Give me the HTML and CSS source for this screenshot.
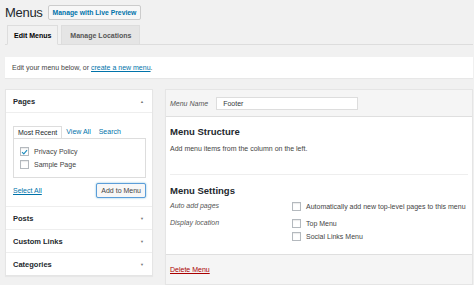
FILE: index.html
```html
<!DOCTYPE html>
<html lang="en">
<head>
  <meta charset="UTF-8">
  <title>Menus</title>
  <link rel="stylesheet" href="styles.css">
</head>
<body>
  <div class="wrap">
    <div class="page-head">
      <h1>Menus</h1>
      <a class="head-button" href="#">Manage with Live Preview</a>
    </div>

    <div class="nav-tabs">
      <a class="nav-tab active" href="#">Edit Menus</a>
      <a class="nav-tab" href="#">Manage Locations</a>
    </div>

    <div class="notice">
      Edit your menu below, or <a href="#">create a new menu</a>.
    </div>

    <div class="columns">
      <div class="sidebar">
        <div class="acc-section open">
          <div class="acc-title">Pages <span class="arrow">&#9650;</span></div>
          <div class="acc-body">
            <div class="inner-tabs">
              <span class="inner-tab active">Most Recent</span>
              <a class="inner-tab" href="#">View All</a>
              <a class="inner-tab" href="#">Search</a>
            </div>
            <div class="checklist">
              <label class="check-row"><span class="box checked"><svg viewBox="0 0 10 10" width="8" height="8"><path d="M1.5 5.2 L4 7.6 L8.6 2.2" fill="none" stroke="#1e8cbe" stroke-width="1.6"/></svg></span>Privacy Policy</label>
              <label class="check-row"><span class="box"></span>Sample Page</label>
            </div>
            <div class="acc-actions">
              <a href="#">Select All</a>
              <button class="btn">Add to Menu</button>
            </div>
          </div>
        </div>
        <div class="acc-section">
          <div class="acc-title">Posts <span class="arrow">&#9660;</span></div>
        </div>
        <div class="acc-section">
          <div class="acc-title">Custom Links <span class="arrow">&#9660;</span></div>
        </div>
        <div class="acc-section">
          <div class="acc-title">Categories <span class="arrow">&#9660;</span></div>
        </div>
      </div>

      <div class="menu-edit">
        <div class="menu-header">
          <label class="field-label">Menu Name</label>
          <input class="menu-name" type="text" value="Footer">
        </div>
        <div class="menu-body">
          <h3>Menu Structure</h3>
          <p class="hint">Add menu items from the column on the left.</p>
          <div class="settings">
            <h3>Menu Settings</h3>
            <div class="setting-row">
              <span class="field-label">Auto add pages</span>
              <div class="options">
                <label class="check-row"><span class="box"></span>Automatically add new top-level pages to this menu</label>
              </div>
            </div>
            <div class="setting-row">
              <span class="field-label">Display location</span>
              <div class="options">
                <label class="check-row"><span class="box"></span>Top Menu</label>
                <label class="check-row"><span class="box"></span>Social Links Menu</label>
              </div>
            </div>
          </div>
        </div>
        <div class="menu-footer">
          <a class="delete" href="#">Delete Menu</a>
        </div>
      </div>
    </div>
  </div>
</body>
</html>
```

FILE: styles.css
```css
body {
  margin: 0;
  background-color: #f1f1f1;
  font-family: "Liberation Sans", Arial, sans-serif;
  font-size: 7px;
  color: #444;
}

a {
  color: #0073aa;
}

.wrap {
  padding: 3px 1px 0 5px;
}

.page-head {
  display: flex;
  align-items: center;
  gap: 5px;
  height: 18px;
}

h1 {
  margin: 0;
  font-size: 13px;
  font-weight: 300;
  letter-spacing: -0.3px;
  color: #23282d;
}

.head-button {
  display: inline-block;
  padding: 3px 4px;
  border: 1px solid #ccc;
  border-radius: 2px;
  background-color: #f7f7f7;
  font-size: 6.8px;
  font-weight: bold;
  text-decoration: none;
}

.nav-tabs {
  display: flex;
  gap: 3px;
  margin-top: 4px;
  padding-left: 2px;
  border-bottom: 1px solid #ddd;
  height: 19px;
}

.nav-tab {
  display: flex;
  align-items: center;
  padding: 0 6px;
  margin-bottom: -1px;
  border: 1px solid #ddd;
  background-color: #e5e5e5;
  color: #555;
  font-size: 7px;
  font-weight: bold;
  text-decoration: none;
}

.nav-tab.active {
  background-color: #f1f1f1;
  border-bottom-color: #f1f1f1;
  color: #000;
}

.nav-tab + .nav-tab {
  padding: 0 8px;
}

.notice {
  margin-top: 12px;
  padding: 6px 7px;
  background-color: #fff;
  box-shadow: 0 1px 1px rgba(0, 0, 0, 0.04);
  line-height: 9px;
}

.columns {
  display: flex;
  gap: 12px;
  margin-top: 11px;
  align-items: flex-start;
}

.sidebar {
  width: 146px;
  flex-shrink: 0;
  background-color: #fff;
  border: 1px solid #e5e5e5;
  box-shadow: 0 1px 1px rgba(0, 0, 0, 0.04);
}

.acc-section {
  border-top: 1px solid #eee;
}

.acc-section:first-child {
  border-top: none;
}

.acc-title {
  display: flex;
  justify-content: space-between;
  align-items: center;
  height: 22px;
  padding: 0 8px 0 7px;
  font-size: 7.5px;
  font-weight: bold;
  color: #23282d;
}

.acc-section.open .acc-title {
  height: 22px;
  border-bottom: 1px solid #eee;
}

.arrow {
  font-size: 4px;
  color: #777;
}

.acc-body {
  padding: 13px 6px 8px 7px;
  background-color: #fff;
}

.inner-tabs {
  display: flex;
  height: 12px;
}

.inner-tab {
  padding: 0 4px;
  line-height: 12px;
  text-decoration: none;
}

.inner-tab.active {
  color: #23282d;
  border: 1px solid #ddd;
  border-bottom: none;
  background-color: #fff;
  line-height: 11px;
}

.checklist {
  border: 1px solid #ddd;
  height: 40px;
  box-sizing: border-box;
  display: flex;
  flex-direction: column;
  gap: 4px;
  padding: 8px 6px 4px;
}

.check-row {
  display: flex;
  align-items: center;
  gap: 5px;
  line-height: 9px;
}

.box {
  display: inline-flex;
  align-items: center;
  justify-content: center;
  width: 7px;
  height: 7px;
  border: 1px solid #b4b9be;
  background-color: #fff;
  box-shadow: inset 0 1px 1px rgba(0, 0, 0, 0.08);
  flex-shrink: 0;
}

.acc-actions {
  display: flex;
  justify-content: space-between;
  align-items: center;
  margin-top: 5px;
}

.btn {
  padding: 3px 4px;
  border: 1px solid #5b9dd9;
  border-radius: 2px;
  background-color: #f7f7f7;
  box-shadow: 0 0 2px rgba(30, 140, 190, 0.6);
  font-family: inherit;
  font-size: 7px;
  color: #444;
}

.menu-edit {
  flex: 1;
  background-color: #fff;
  border: 1px solid #e5e5e5;
  box-shadow: 0 1px 1px rgba(0, 0, 0, 0.04);
}

.menu-header {
  display: flex;
  align-items: center;
  gap: 8px;
  height: 26px;
  padding: 0 4px;
  background-color: #f5f5f5;
  border-bottom: 1px solid #dfdfdf;
}

.field-label {
  font-style: italic;
  color: #555;
}

.menu-name {
  width: 142px;
  height: 13px;
  box-sizing: border-box;
  padding: 0 6px;
  border: 1px solid #ddd;
  font-family: inherit;
  font-size: 7px;
  color: #32373c;
}

h3 {
  margin: 0;
  font-size: 9.5px;
  font-weight: bold;
  color: #23282d;
}

.menu-body {
  padding: 9px 4px 13px;
}

.hint {
  margin: 8px 0 0;
}

.settings {
  margin-top: 22px;
  padding-top: 10px;
  border-top: 1px solid #eee;
}

.setting-row {
  display: flex;
  margin-top: 6px;
}

.setting-row + .setting-row {
  margin-top: 8px;
}

.setting-row .field-label {
  width: 122px;
  flex-shrink: 0;
}

.options {
  display: flex;
  flex-direction: column;
  gap: 4px;
}

.menu-footer {
  padding: 10px 4px 9px;
  background-color: #f5f5f5;
  border-top: 1px solid #dfdfdf;
  line-height: 10px;
}

.delete {
  color: #a00;
}
```
